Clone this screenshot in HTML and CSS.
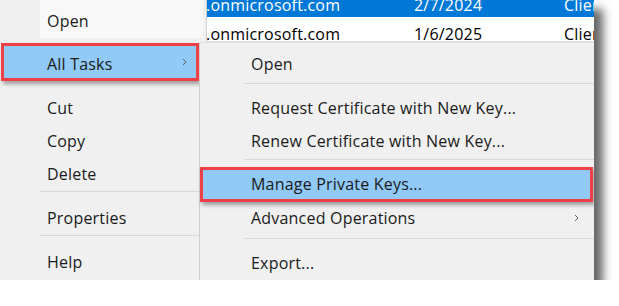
FILE: index.html
```html
<!DOCTYPE html>
<html lang="en">
<head>
    <meta charset="UTF-8">
    <title>All Tasks - Manage Private Keys</title>
    <link rel="stylesheet" href="styles.css">
</head>
<body>
    <div class="shot">
        <div class="ctx">
            <div class="item open">Open</div>
            <div class="gap"></div>
            <div class="item picked">
                <span>All Tasks</span>
                <svg class="chev" width="5" height="8" viewBox="0 0 5 8"><path d="M1 1l3 3-3 3" fill="none" stroke="#666" stroke-width="1"/></svg>
            </div>
            <div class="gap wide"></div>
            <div class="item">Cut</div>
            <div class="item">Copy</div>
            <div class="item">Delete</div>
            <div class="sep"></div>
            <div class="item">Properties</div>
            <div class="sep"></div>
            <div class="item">Help</div>
        </div>

        <div class="list">
            <div class="row sel">
                <span class="c-name">.onmicrosoft.com</span>
                <span class="c-date">2/7/2024</span>
                <span class="c-type">Client Authentication</span>
            </div>
            <div class="row">
                <span class="c-name">.onmicrosoft.com</span>
                <span class="c-date">1/6/2025</span>
                <span class="c-type">Client Authentication</span>
            </div>
        </div>

        <!-- submenu of All Tasks -->
        <div class="sub">
            <div class="item">Open</div>
            <div class="sep low"></div>
            <div class="item">Request Certificate with New Key...</div>
            <div class="item">Renew Certificate with New Key...</div>
            <div class="sep short"></div>
            <div class="item picked">Manage Private Keys...</div>
            <div class="item arrow">
                <span>Advanced Operations</span>
                <svg class="chev" width="5" height="8" viewBox="0 0 5 8"><path d="M1 1l3 3-3 3" fill="none" stroke="#666" stroke-width="1"/></svg>
            </div>
            <div class="sep low"></div>
            <div class="item">Export...</div>
        </div>
    </div>
</body>
</html>
```

FILE: styles.css
```css
body {
    margin: 0;
    background-color: #fff;
    font-family: "Open Sans", "Noto Sans", sans-serif;
    font-size: 16px;
    letter-spacing: 0.2px;
    color: #1a1a1a;
}
.shot {
    position: relative;
    display: grid;
    grid-template-columns: 207px 1fr;
    grid-template-rows: 42px 1fr;
    width: 594px;
    height: 280px;
    overflow: hidden;
    background-color: #f0f0f0;
    box-shadow: 9px 9px 9px rgba(0, 0, 0, 0.6);
}
.ctx {
    grid-row: 1 / 3;
    border-right: 1px solid #cfcfcf;
}
.item {
    height: 33px;
    line-height: 35px;
    padding-left: 47px;
    white-space: nowrap;
}
.ctx .open {
    height: 38px;
    padding-top: 5px;
    padding-left: 7px;
    margin: 0 3px 0 40px;
    box-sizing: border-box;
    line-height: 33px;
    background-color: #f8f8f8;
}
.gap {
    height: 5px;
}
.gap.wide {
    height: 10px;
}
.picked {
    box-sizing: border-box;
    border: 3px solid #ef4048;
    background-color: #91c9f7;
    box-shadow: 2px 3px 4px rgba(0, 0, 0, 0.35);
}
.ctx .picked {
    display: flex;
    align-items: center;
    justify-content: space-between;
    height: 38px;
    margin: 0 7px 0 1px;
    padding: 3px 9px 0 43px;
    line-height: 30px;
}
.ctx .chev {
    margin-top: -3px;
}
.sep {
    height: 11px;
    margin-left: 40px;
    padding-top: 1px;
    box-sizing: border-box;
}
.sep::before {
    content: "";
    display: block;
    height: 1px;
    background-color: #d9d9d9;
}

/* list behind the menus */
.list {
    margin-top: -8px;
    height: 50px;
    overflow: hidden;
    background-color: #fff;
    border-bottom: 1px solid #dcdcdc;
    box-sizing: border-box;
}
.row {
    display: grid;
    grid-template-columns: 207px 150px 1fr;
    height: 25px;
    line-height: 27px;
    white-space: nowrap;
    color: #000;
}
.row + .row {
    padding-top: 4px;
    box-sizing: border-box;
}
.row.sel {
    background-color: #0078d7;
    color: #fff;
}
.c-name {
    margin-left: -1px;
}

/* submenu */
.sub {
    position: absolute;
    left: 199px;
    top: 42px;
    right: 0;
    bottom: 0;
    padding-top: 4px;
    background-color: #f0f0f0;
    border-left: 1px solid #cfcfcf;
    border-top: 1px solid #e2e2e2;
}
.sub .item {
    padding-left: 51px;
}
.sub .sep {
    margin-left: 44px;
    padding-top: 2px;
}
.sub .sep.low {
    padding-top: 3px;
}
.sub .sep.short {
    height: 10px;
}
.sub .picked {
    height: 35px;
    line-height: 29px;
    margin-right: 1px;
    padding-left: 48px;
}
.sub .arrow {
    display: flex;
    align-items: center;
    justify-content: space-between;
    padding-right: 15px;
}
.sub .chev {
    margin-top: -2px;
}
```
